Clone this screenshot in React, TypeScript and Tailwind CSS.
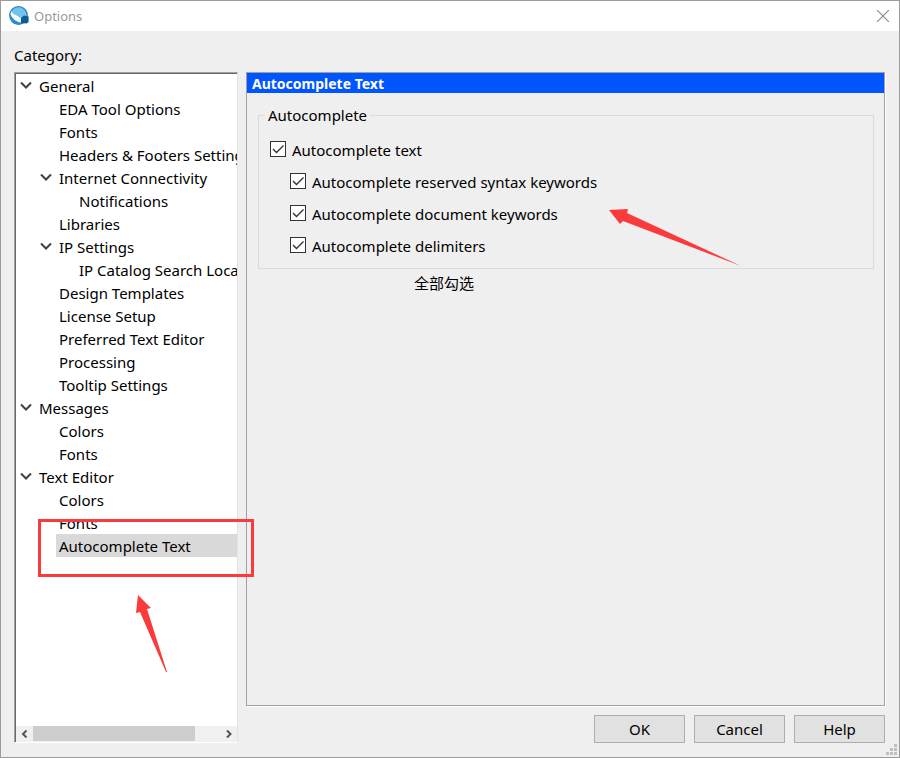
import { useState } from "react";

type TreeItem = { label: string; level: 0 | 1 | 2; open?: boolean };

const tree: TreeItem[] = [
  { label: "General", level: 0, open: true },
  { label: "EDA Tool Options", level: 1 },
  { label: "Fonts", level: 1 },
  { label: "Headers & Footers Setting", level: 1 },
  { label: "Internet Connectivity", level: 1, open: true },
  { label: "Notifications", level: 2 },
  { label: "Libraries", level: 1 },
  { label: "IP Settings", level: 1, open: true },
  { label: "IP Catalog Search Locat", level: 2 },
  { label: "Design Templates", level: 1 },
  { label: "License Setup", level: 1 },
  { label: "Preferred Text Editor", level: 1 },
  { label: "Processing", level: 1 },
  { label: "Tooltip Settings", level: 1 },
  { label: "Messages", level: 0, open: true },
  { label: "Colors", level: 1 },
  { label: "Fonts", level: 1 },
  { label: "Text Editor", level: 0, open: true },
  { label: "Colors", level: 1 },
  { label: "Fonts", level: 1 },
  { label: "Autocomplete Text", level: 1 },
];

const indents = ["pl-0", "pl-5", "pl-10"];

function Logo() {
  return (
    <svg className="h-5 w-5 shrink-0" viewBox="0 0 20 20" aria-hidden="true">
      <circle cx="9.5" cy="9.5" r="8.8" fill="#74c3ea" stroke="#2383b8" strokeWidth="1.2" />
      <path d="M1 8 C1 14 5 18.5 11 18.6 L13 16 C8 16 4 13 1 8Z" fill="#2b8fc6" />
      <path d="M2 5 C4 8.5 8 9 12 12.5 L12 16.5 C7 16 3 12.5 1.6 8Z" fill="#f3fafd" />
      <path d="M12 12 L15 9.5 L19.6 10.5 L19.6 16 L17.5 17.5 L12 17Z" fill="#0b5d94" />
    </svg>
  );
}

function TreeRow({ item, selected, onSelect }: { item: TreeItem; selected: boolean; onSelect: () => void }) {
  return (
    <li className={`flex h-[23px] items-center ${indents[item.level]}`}>
      <span className="flex w-5 shrink-0 justify-center">
        {item.open && (
          <svg className="mb-0.5 h-2 w-3" viewBox="0 0 12 8" fill="none" stroke="#404040" strokeWidth="2" aria-hidden="true">
            <path d="M1 1.5 L6 6.5 L11 1.5" />
          </svg>
        )}
      </span>
      <button
        type="button"
        onClick={onSelect}
        className={`h-[23px] min-w-0 flex-1 overflow-hidden whitespace-nowrap pl-[3px] text-left leading-[24px] ${selected ? "bg-[#d9d9d9]" : ""}`}
      >
        {item.label}
      </button>
    </li>
  );
}

function Check({ label, nested = false }: { label: string; nested?: boolean }) {
  return (
    <label className={`flex h-8 items-center gap-1.5 ${nested ? "pl-5" : ""}`}>
      <span className="grid h-4 w-4 shrink-0">
        <input
          type="checkbox"
          defaultChecked
          className="peer col-start-1 row-start-1 h-4 w-4 appearance-none border border-[#333333] bg-white"
        />
        <svg
          className="pointer-events-none invisible col-start-1 row-start-1 h-4 w-4 peer-checked:visible"
          viewBox="0 0 16 16"
          fill="none"
          stroke="#333333"
          strokeWidth="1.4"
          aria-hidden="true"
        >
          <path d="M3 8 L6.5 11.5 L13.5 4.5" />
        </svg>
      </span>
      <span className="pt-0.5">{label}</span>
    </label>
  );
}

function ScrollArrow({ label, path }: { label: string; path: string }) {
  return (
    <button type="button" aria-label={label} className="flex h-4 w-[17px] shrink-0 items-center justify-center">
      <svg className="h-2 w-2" viewBox="0 0 8 8" fill="none" stroke="#555555" strokeWidth="2" aria-hidden="true">
        <path d={path} />
      </svg>
    </button>
  );
}

export default function App() {
  const [selected, setSelected] = useState(20);
  return (
    <div className="relative flex min-h-screen flex-col border border-[#9b9b9b] bg-[#efefef] font-['Noto_Sans','Noto_Sans_CJK_SC',sans-serif] text-[15px] leading-5 text-black">
      <header className="flex h-[30px] items-center gap-[5px] bg-white pl-2 pr-2.5">
        <Logo />
        <h1 className="flex-1 text-[13px] text-[#999999]">Options</h1>
        <button type="button" aria-label="Close">
          <svg className="h-3 w-3" viewBox="0 0 12 12" stroke="#888888" strokeWidth="1.1" aria-hidden="true">
            <path d="M0 0 L12 12 M12 0 L0 12" />
          </svg>
        </button>
      </header>

      <main className="flex flex-1 flex-col pb-3.5 pl-[13px] pr-3.5">
        <h2 className="pb-[7px] pt-3.5">Category:</h2>
        <div className="flex flex-1 gap-2">
          <nav
            aria-label="Category"
            className="flex w-[224px] shrink-0 flex-col border border-b-white border-l-[#a0a0a0] border-r-[#e3e3e3] border-t-[#a0a0a0] bg-white"
          >
            <div className="flex flex-1 flex-col border-l border-t border-[#696969]">
              <ul className="flex-1">
                {tree.map((item, i) => (
                  <TreeRow key={i} item={item} selected={i === selected} onSelect={() => setSelected(i)} />
                ))}
              </ul>
              <div className="flex h-4 items-start bg-[#f0f0f0]">
                <ScrollArrow label="Scroll left" path="M5.5 0.5 L2 4 L5.5 7.5" />
                <div className="flex-1">
                  <div className="h-[15px] w-[162px] bg-[#cdcdcd]" />
                </div>
                <ScrollArrow label="Scroll right" path="M2 0.5 L5.5 4 L2 7.5" />
              </div>
            </div>
          </nav>

          <div className="flex min-w-0 flex-1 flex-col gap-[9px]">
            <section className="flex-1 border border-[#a0a0a0] shadow-[1px_1px_0_#ffffff]">
              <h2 className="h-5 bg-[#0055ff] pl-[5px] text-sm leading-[22px] font-bold text-white">Autocomplete Text</h2>
              <fieldset className="ml-[11px] mr-2.5 mt-3 border border-[#dadada] px-[11px] pb-[7px] pt-2">
                <legend className="-ml-[5px] px-[3px] leading-5">Autocomplete</legend>
                <Check label="Autocomplete text" />
                <Check nested label="Autocomplete reserved syntax keywords" />
                <Check nested label="Autocomplete document keywords" />
                <Check nested label="Autocomplete delimiters" />
              </fieldset>
              <p className="ml-[167px] mt-1">全部勾选</p>
            </section>
            <div className="flex justify-end gap-[9px]">
              {["OK", "Cancel", "Help"].map((name) => (
                <button key={name} type="button" className="h-7 w-[91px] border border-[#adadad] bg-[#e1e1e1]">
                  {name}
                </button>
              ))}
            </div>
          </div>
        </div>
      </main>

      <svg className="absolute bottom-0.5 right-0.5 h-[11px] w-[11px]" viewBox="0 0 11 11" fill="#bfbfbf" aria-hidden="true">
        <path d="M8 0h3v3h-3z M4 4h3v3h-3z M8 4h3v3h-3z M0 8h3v3h-3z M4 8h3v3h-3z M8 8h3v3h-3z" />
      </svg>

      <div className="pointer-events-none absolute left-[37px] top-[518px] h-[58px] w-[216px] border-3 border-[#fb3b3b]" />
      <svg className="pointer-events-none absolute left-[134px] top-[594px] h-[78px] w-9" viewBox="0 0 36 78" fill="#fb3b3b" aria-hidden="true">
        <path d="M3 0 L16 13 L12 14 L32 77 L31 77 L5 17 L1 18Z" />
      </svg>
      <svg className="pointer-events-none absolute left-[608px] top-[208px] h-[58px] w-[134px]" viewBox="0 0 134 58" fill="#fb3b3b" aria-hidden="true">
        <path d="M0 1 L19 0 L18 4 L132 57 L14 12 L11 15Z" />
      </svg>
    </div>
  );
}
